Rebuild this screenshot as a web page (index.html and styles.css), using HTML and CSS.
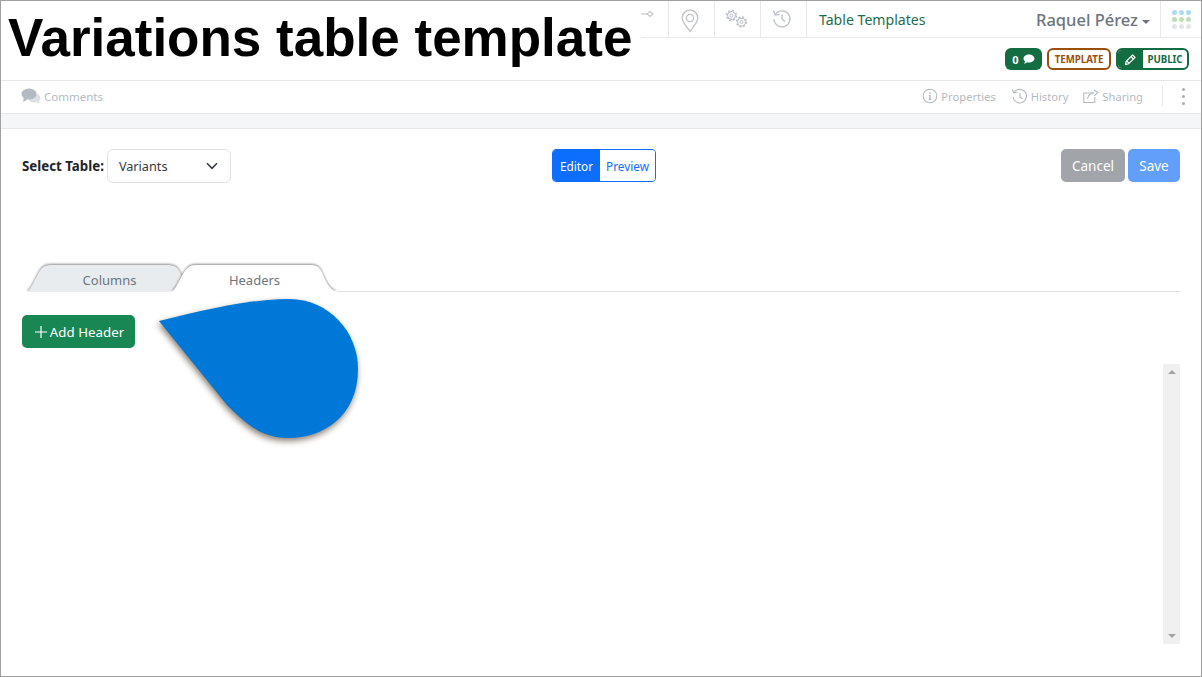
FILE: index.html
```html
<!DOCTYPE html>
<html lang="en">
<head>
<meta charset="utf-8">
<title>Variations table template</title>
<link rel="stylesheet" href="styles.css">
</head>
<body>
<div class="frame">
  <header class="topbar">
    <div class="nav-cell nav-cut">
      <svg width="16" height="16" viewBox="0 0 16 16" fill="none" stroke="#c3c8cf" stroke-width="1.200"><path d="M1 7h6"/><path d="M7 7l3-2.500L13 7l-3 2.500z"/></svg>
    </div>
    <div class="nav-cell">
      <svg class="pin" width="18" height="24" viewBox="0 0 18 24" fill="none" stroke="#bcc2c9" stroke-width="1.300"><path d="M9 22.500C6 17.500 1.200 13.500 1.200 9a7.800 7.800 0 0 1 15.600 0C16.800 13.500 12 17.500 9 22.500z"/><circle cx="9" cy="9" r="3.600"/></svg>
    </div>
    <div class="nav-cell">
      <svg width="24" height="20" viewBox="0 0 24 20" fill="none" stroke="#bcc2c9"><circle cx="7.500" cy="6.500" r="3.900" stroke-width="1.100"/><circle cx="7.500" cy="6.500" r="5" stroke-width="1.400" stroke-dasharray="2 1.930"/><circle cx="7.500" cy="6.500" r="1.500" stroke-width="1"/><circle cx="17.500" cy="13" r="3.900" stroke-width="1.100"/><circle cx="17.500" cy="13" r="5" stroke-width="1.400" stroke-dasharray="2 1.930"/><circle cx="17.500" cy="13" r="1.500" stroke-width="1"/></svg>
    </div>
    <div class="nav-cell">
      <svg width="20" height="20" viewBox="0 0 20 20" fill="none" stroke="#bcc2c9" stroke-width="1.300"><path d="M3.300 5.500A8 8 0 1 1 2 10"/><path d="M1.500 1.800l1.600 4.300 4.300-.6"/><path d="M10 5.500V10l3 2.500"/></svg>
    </div>
    <div class="nav-title">Table Templates</div>
    <div class="user">Raquel Pérez<span class="caret"></span></div>
    <div class="apps">
      <span class="dot blue"></span><span class="dot blue"></span><span class="dot blue"></span>
      <span class="dot green"></span><span class="dot green"></span><span class="dot green"></span>
      <span class="dot grey"></span><span class="dot grey"></span><span class="dot grey"></span>
    </div>
  </header>

  <div class="badges">
    <span class="badge-count">0
      <svg width="12" height="10" viewBox="0 0 12 10" fill="#fff"><path d="M6 .5c3 0 5.500 1.800 5.500 4S9 8.500 6 8.500c-.7 0-1.300-.1-1.900-.3C3.300 9 2 9.500.9 9.500c.7-.6 1.100-1.400 1.200-2.200C1 6.600.5 5.600.5 4.500.5 2.300 3 .5 6 .5z"/></svg>
    </span>
    <span class="badge-template">TEMPLATE</span>
    <span class="badge-public">
      <span class="public-icon">
        <svg width="11" height="11" viewBox="0 0 11 11" fill="none" stroke="#fff" stroke-width="1.200"><path d="M7.600 1l2.400 2.400-6.400 6.400-3 .7.600-3.100z"/><path d="M6 2.600l2.400 2.400M1.800 7l2 2"/></svg>
      </span>
      <span class="public-text">PUBLIC</span>
    </span>
  </div>

  <div class="toolbar">
    <div class="tool tool-comments">
      <svg width="20" height="16" viewBox="0 0 20 16"><ellipse cx="13.500" cy="10" rx="6" ry="4.500" fill="#dce0e4"/><path d="M16 15.500l3-1-2-2z" fill="#dce0e4"/><ellipse cx="8" cy="6" rx="7.500" ry="5.500" fill="#b4bac1"/><path d="M2 13.500c2 0 3-1 4-2l-3-2z" fill="#b4bac1"/></svg>
      <span>Comments</span>
    </div>
    <div class="tool-spacer"></div>
    <div class="tool">
      <svg width="16" height="16" viewBox="0 0 16 16" fill="none" stroke="#b4bac1" stroke-width="1.100"><circle cx="8" cy="8" r="6.800"/><path d="M8 7v4.500M6.800 7.200H8M6.800 11.500h2.400" stroke-width="1.300"/><circle cx="8" cy="4.800" r=".9" fill="#b4bac1" stroke="none"/></svg>
      <span>Properties</span>
    </div>
    <div class="tool">
      <svg width="17" height="17" viewBox="0 0 17 17" fill="none" stroke="#b4bac1" stroke-width="1.100"><path d="M3 4.500A6.800 6.800 0 1 1 2 9"/><path d="M1.300 1.500l1.500 3.300 3.500-.6"/><path d="M9 5v4l2.500 2"/></svg>
      <span>History</span>
    </div>
    <div class="tool">
      <svg width="16" height="16" viewBox="0 0 16 16" fill="none" stroke="#b4bac1" stroke-width="1.100"><path d="M10 5H.8v9.500h11V9"/><path d="M4.500 11c.5-3.500 3-6 7-6.300"/><path d="M10.800 1.800L14.800 4.600 11.200 7.800"/></svg>
      <span>Sharing</span>
    </div>
    <div class="tool-rule"></div>
    <div class="kebab"><i></i><i></i><i></i></div>
  </div>
  <div class="strip"></div>

  <main class="content">
    <div class="controls">
      <div class="select-group">
        <label class="select-label">Select Table:</label>
        <div class="select">
          <span>Variants</span>
          <svg width="12" height="8" viewBox="0 0 12 8" fill="none" stroke="#343a40" stroke-width="1.600"><path d="M1 1.300l5 5 5-5"/></svg>
        </div>
      </div>
      <div class="toggle">
        <span class="toggle-on">Editor</span>
        <span class="toggle-off">Preview</span>
      </div>
      <div class="actions">
        <span class="btn cancel">Cancel</span>
        <span class="btn save">Save</span>
      </div>
    </div>

    <div class="tabs">
      <div class="tab tab-back">
        <svg class="tab-shape" width="158" height="28" viewBox="0 0 158 28"><path d="M0 28C6 23 10 9 15 4 17 2 20 1 24 1H140C145 1 149 2 151 5 153 8 158 14 158 28Z" fill="#e9ecef"/></svg>
        <span>Columns</span>
      </div>
      <div class="tab tab-front">
        <svg class="tab-shape" width="166" height="28" viewBox="0 0 166 28"><path d="M0 28C6 22 10 9 15 4.500 17 2 20 1 24 1H138C143 1 146 2 148 5 152 10 155 26 166 28Z" fill="#fff"/></svg>
        <span>Headers</span>
      </div>
      <div class="tab-line"></div>
    </div>

    <div class="add-row">
      <span class="btn add"><svg width="12" height="12" viewBox="0 0 12 12" stroke="#fff" stroke-width="1.200"><path d="M6 0v12M0 6h12"/></svg>Add Header</span>
    </div>
    <div class="scroll-area">
      <div class="scrollbar"><span class="arrow-up"></span><span class="arrow-down"></span></div>
    </div>
  </main>

  <h1 class="page-title">Variations table template</h1>
  <svg class="callout" width="215" height="160" viewBox="0 0 215 160"><path d="M2 24C50 12 95 2 132 2 172 2 201 35 201 72 201 120 165 141 132 141 105 141 90 128 70 108Z" fill="#0078d7"/></svg>
</div>
</body>
</html>
```
FILE: styles.css
```css
* { box-sizing: border-box; }
html, body { margin: 0; padding: 0; background: #fff; }
body { font-family: "Noto Sans", "Open Sans", sans-serif; color: #212529; }
.frame { position: relative; width: 1202px; height: 677px; border: 1px solid #a0a0a0; overflow: hidden; display: flex; flex-direction: column; background: #fff; }

.topbar { height: 37px; flex: none; display: flex; align-items: stretch; padding-left: 622px; border-bottom: 1px solid #e6e8eb; }
.nav-cell { width: 46px; height: 36px; display: flex; align-items: center; justify-content: center; padding-right: 3px; border-right: 1px solid #e6e8eb; }
.nav-cut { justify-content: flex-start; align-items: flex-start; padding: 6px 0 0 17px; }
.pin { margin-top: 4px; }
.nav-title { padding-left: 12px; font-size: 14.100px; line-height: 37px; color: #1f6b4d; width: 202px; white-space: nowrap; }
.user { width: 151px; text-align: right; padding-right: 10px; font-size: 16.500px; font-weight: 500; line-height: 38px; color: #6c757d; white-space: nowrap; }
.caret { display: inline-block; margin-left: 4px; vertical-align: 2px; border: 4px solid transparent; border-top-color: #6c757d; border-bottom: 0; }
.apps { flex: 1; border-left: 1px solid #e6e8eb; display: grid; grid-template-columns: repeat(3, 5px); grid-auto-rows: 5px; gap: 2px; padding: 9px 0 0 11px; }
.dot { width: 5px; height: 5px; border-radius: 50%; }
.blue { background: #a9dcf3; }
.green { background: #bfe0b5; }
.grey { background: #e2e4e6; }

.badges { height: 43px; flex: none; border-bottom: 1px solid #e6e8eb; display: flex; justify-content: flex-end; align-items: flex-start; gap: 5px; padding: 10px 12px 0 0; font-size: 10px; font-weight: 700; }
.badges > span { height: 22px; border-radius: 6px; display: flex; align-items: center; white-space: nowrap; }
.badge-count { width: 37px; background: #146c43; color: #fff; justify-content: center; gap: 4px; font-size: 11px; }
.badge-template { width: 64px; border: 2px solid #9a4f0e; color: #9a4f0e; justify-content: center; font-size: 9.700px; }
.badge-public { width: 73px; border: 2px solid #146c43; background: #fff; overflow: hidden; }
.public-icon { width: 25px; height: 100%; background: #146c43; display: flex; align-items: center; justify-content: center; }
.public-text { flex: 1; text-align: center; color: #146c43; font-size: 9.700px; }

.toolbar { height: 32px; flex: none; display: flex; align-items: center; padding: 0 11px 2px 20px; font-size: 11.200px; color: #b4bac1; }
.tool { display: flex; align-items: center; gap: 3px; margin-right: 15px; white-space: nowrap; }
.tool-comments { margin-right: 0; font-size: 11.500px; }
.tool-spacer { flex: 1; }
.tool-rule { width: 1px; height: 20px; background: #e6e8eb; margin: 0 13px 0 4px; }
.kebab { width: 14px; display: flex; flex-direction: column; align-items: center; gap: 4px; }
.kebab i { width: 3px; height: 3px; border-radius: 50%; background: #a8aeb5; }
.strip { height: 16px; flex: none; background: #f5f6f8; border-top: 1px solid #e6e8eb; border-bottom: 1px solid #e6e8eb; }

.content { flex: 1; display: flex; flex-direction: column; padding: 20px 21px 0 21px; min-height: 0; }
.controls { display: flex; align-items: flex-start; height: 34px; flex: none; }
.select-group { display: flex; align-items: center; gap: 3px; width: 530px; flex: none; }
.select-label { font-size: 13.300px; font-weight: 700; white-space: nowrap; }
.select { width: 124px; height: 34px; border: 1px solid #dee2e6; border-radius: 6px; display: flex; align-items: center; justify-content: space-between; padding: 0 12px 0 11px; font-size: 12.700px; color: #343a40; }
.toggle { display: flex; height: 33px; width: 104px; flex: none; border: 1px solid #0d6efd; border-radius: 4px; overflow: hidden; font-size: 11.800px; }
.toggle span { display: flex; align-items: center; justify-content: center; }
.toggle-on { width: 47px; background: #0d6efd; color: #fff; }
.toggle-off { flex: 1; color: #0d6efd; background: #fff; }
.actions { display: flex; gap: 3px; flex: 1; justify-content: flex-end; }
.btn { display: inline-flex; align-items: center; justify-content: center; height: 33px; border-radius: 5px; color: #fff; font-size: 13.500px; white-space: nowrap; }
.cancel { width: 64px; background: #a1a5a9; }
.save { width: 52px; background: #619ffb; }

.tabs { display: flex; height: 28px; margin-top: 81px; flex: none; padding-left: 5px; }
.tab { position: relative; height: 28px; display: flex; align-items: center; justify-content: center; font-size: 13px; color: #6c757d; padding-top: 4px; }
.tab span { position: relative; }
.tab-shape { position: absolute; left: 0; top: 0; overflow: visible; filter: drop-shadow(0 -.5px 1px rgba(0, 0, 0, .45)); clip-path: inset(-4px -4px 0 -4px); }
.tab-back { width: 158px; padding-left: 7px; }
.tab-front { width: 166px; margin-left: -13px; padding-right: 1px; }
.tab-line { flex: 1; border-bottom: 1px solid #dfe1e3; }

.add-row { flex: none; padding-top: 23px; }
.add { width: 113px; background: #198754; gap: 3px; padding-left: 2px; font-size: 13.300px; }
.scroll-area { flex: 1; display: flex; justify-content: flex-end; margin-top: 16px; margin-bottom: 32px; }
.scrollbar { width: 17px; background: #f0f0f0; display: flex; flex-direction: column; justify-content: space-between; align-items: center; padding: 6px 0; }
.arrow-up { border: 4px solid transparent; border-bottom: 4px solid #a3a3a3; border-top: 0; }
.arrow-down { border: 4px solid transparent; border-top: 4px solid #a3a3a3; border-bottom: 0; }

.page-title { position: absolute; left: 0; top: 0; margin: 0; padding: 6px 9px 0 7px; background: #fff; font-family: "Liberation Sans", Arial, sans-serif; font-size: 53px; font-weight: 700; line-height: 62px; height: 37px; color: #000; white-space: nowrap; }
.callout { position: absolute; left: 156px; top: 296px; filter: drop-shadow(-1px 3px 3px rgba(60, 40, 20, .6)); }
```
